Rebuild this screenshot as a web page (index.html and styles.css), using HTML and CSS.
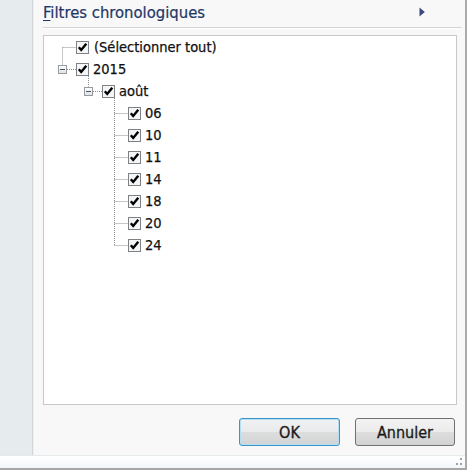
FILE: index.html
```html
<!DOCTYPE html>
<html lang="fr">
<head>
<meta charset="utf-8">
<title>Filtres chronologiques</title>
<link rel="stylesheet" href="styles.css">
</head>
<body>
<div class="window">
  <div class="body">
    <div class="side"></div>
    <div class="main">
      <div class="header">
        <span class="title"><u>F</u>iltres chronologiques</span>
        <svg class="arrow" width="6" height="10" viewBox="0 0 6 10"><path d="M0.5 0.5 L5.8 5 L0.5 9.5 Z" fill="#3b4a7e"/></svg>
      </div>
      <div class="listbox">
        <svg class="lines" width="120" height="220" viewBox="0 0 120 220">
          <g stroke="#8c8c8c" stroke-width="1" stroke-dasharray="1 1" fill="none">
            <path d="M18.5 11.5 V28.5"/>
            <path d="M18.5 11.5 H32"/>
            <path d="M23 33.5 H32"/>
            <path d="M44.5 40 V50.5"/>
            <path d="M49 55.5 H58"/>
            <path d="M70.5 62 V209.5"/>
            <path d="M70.5 77.5 H84"/>
            <path d="M70.5 99.5 H84"/>
            <path d="M70.5 121.5 H84"/>
            <path d="M70.5 143.5 H84"/>
            <path d="M70.5 165.5 H84"/>
            <path d="M70.5 187.5 H84"/>
            <path d="M70.5 209.5 H84"/>
          </g>
        </svg>
        <div class="row lvl0"><svg class="cb" width="13" height="13" viewBox="0 0 13 13"><rect x="0.5" y="0.5" width="12" height="12" fill="#f4f5f6" stroke="#7f8285"/><path d="M2.8 6.2 L5.2 9 L10.3 2.8" fill="none" stroke="#000" stroke-width="2.4"/></svg><span class="label">(Sélectionner tout)</span></div>
        <div class="row lvl1"><span class="exp"></span><svg class="cb" width="13" height="13" viewBox="0 0 13 13"><rect x="0.5" y="0.5" width="12" height="12" fill="#f4f5f6" stroke="#7f8285"/><path d="M2.8 6.2 L5.2 9 L10.3 2.8" fill="none" stroke="#000" stroke-width="2.4"/></svg><span class="label">2015</span></div>
        <div class="row lvl2"><span class="exp"></span><svg class="cb" width="13" height="13" viewBox="0 0 13 13"><rect x="0.5" y="0.5" width="12" height="12" fill="#f4f5f6" stroke="#7f8285"/><path d="M2.8 6.2 L5.2 9 L10.3 2.8" fill="none" stroke="#000" stroke-width="2.4"/></svg><span class="label">août</span></div>
        <div class="row lvl3"><svg class="cb" width="13" height="13" viewBox="0 0 13 13"><rect x="0.5" y="0.5" width="12" height="12" fill="#f4f5f6" stroke="#7f8285"/><path d="M2.8 6.2 L5.2 9 L10.3 2.8" fill="none" stroke="#000" stroke-width="2.4"/></svg><span class="label">06</span></div>
        <div class="row lvl3"><svg class="cb" width="13" height="13" viewBox="0 0 13 13"><rect x="0.5" y="0.5" width="12" height="12" fill="#f4f5f6" stroke="#7f8285"/><path d="M2.8 6.2 L5.2 9 L10.3 2.8" fill="none" stroke="#000" stroke-width="2.4"/></svg><span class="label">10</span></div>
        <div class="row lvl3"><svg class="cb" width="13" height="13" viewBox="0 0 13 13"><rect x="0.5" y="0.5" width="12" height="12" fill="#f4f5f6" stroke="#7f8285"/><path d="M2.8 6.2 L5.2 9 L10.3 2.8" fill="none" stroke="#000" stroke-width="2.4"/></svg><span class="label">11</span></div>
        <div class="row lvl3"><svg class="cb" width="13" height="13" viewBox="0 0 13 13"><rect x="0.5" y="0.5" width="12" height="12" fill="#f4f5f6" stroke="#7f8285"/><path d="M2.8 6.2 L5.2 9 L10.3 2.8" fill="none" stroke="#000" stroke-width="2.4"/></svg><span class="label">14</span></div>
        <div class="row lvl3"><svg class="cb" width="13" height="13" viewBox="0 0 13 13"><rect x="0.5" y="0.5" width="12" height="12" fill="#f4f5f6" stroke="#7f8285"/><path d="M2.8 6.2 L5.2 9 L10.3 2.8" fill="none" stroke="#000" stroke-width="2.4"/></svg><span class="label">18</span></div>
        <div class="row lvl3"><svg class="cb" width="13" height="13" viewBox="0 0 13 13"><rect x="0.5" y="0.5" width="12" height="12" fill="#f4f5f6" stroke="#7f8285"/><path d="M2.8 6.2 L5.2 9 L10.3 2.8" fill="none" stroke="#000" stroke-width="2.4"/></svg><span class="label">20</span></div>
        <div class="row lvl3"><svg class="cb" width="13" height="13" viewBox="0 0 13 13"><rect x="0.5" y="0.5" width="12" height="12" fill="#f4f5f6" stroke="#7f8285"/><path d="M2.8 6.2 L5.2 9 L10.3 2.8" fill="none" stroke="#000" stroke-width="2.4"/></svg><span class="label">24</span></div>
      </div>
      <div class="buttons">
        <button class="btn default">OK</button>
        <button class="btn">Annuler</button>
      </div>
    </div>
  </div>
  <div class="foot">
    <svg class="grip" width="10" height="10" viewBox="0 0 10 10">
      <g fill="#9aa3ab">
        <rect x="7" y="1" width="2" height="2"/>
        <rect x="3" y="6" width="2" height="2"/>
        <rect x="7" y="6" width="2" height="2"/>
      </g>
    </svg>
  </div>
</div>
</body>
</html>
```
FILE: styles.css
```css
html, body {
  margin: 0;
  padding: 0;
  background: #ffffff;
}
body {
  width: 474px;
  height: 476px;
  overflow: hidden;
  font-family: "DejaVu Sans Condensed", "DejaVu Sans", sans-serif;
  font-stretch: condensed;
}
.window {
  width: 465px;
  border-right: 2px solid #aaaaaa;
  border-bottom: 2px solid #a6a6a6;
  display: flex;
  flex-direction: column;
}
.body {
  height: 455px;
  display: flex;
}
.side {
  width: 32px;
  background: #e6ebee;
  border-right: 1px solid #d1d6d9;
  box-shadow: 1px 0 0 #eef1f2;
  margin-right: 1px;
  flex: none;
}
.main {
  flex: 1;
  background: #f8f8f8;
  display: flex;
  flex-direction: column;
}
.header {
  height: 27px;
  margin-left: 9px;
  margin-right: 3px;
  border-bottom: 1px solid #d4d4d4;
  box-shadow: 0 1px 0 #ffffff;
  display: flex;
  align-items: center;
  justify-content: space-between;
}
.title {
  font-size: 16.5px;
  color: #1e3766;
  margin-top: -3px;
  -webkit-text-stroke: 0.2px #1e3766;
}
.title u {
  text-decoration-thickness: 1px;
  text-underline-offset: 2px;
}
.arrow {
  margin-right: 37px;
  margin-top: -3px;
}
.listbox {
  position: relative;
  margin: 7px 8px 0 9px;
  height: 368px;
  border: 1px solid #c8c8c8;
  background: #ffffff;
}
.lines {
  position: absolute;
  left: 0;
  top: 0;
}
.row {
  height: 22px;
  display: flex;
  align-items: center;
  font-size: 14.5px;
  color: #111111;
  -webkit-text-stroke: 0.25px #111111;
}
.lvl0 { padding-left: 32px; }
.lvl1 { padding-left: 14px; }
.lvl2 { padding-left: 40px; }
.lvl3 { padding-left: 84px; }
.exp {
  width: 7px;
  height: 7px;
  border: 1px solid #979a9e;
  background: linear-gradient(#ffffff, #dde1e6);
  margin-right: 9px;
  position: relative;
  flex: none;
}
.exp::after {
  content: "";
  position: absolute;
  left: 1px;
  top: 3px;
  width: 5px;
  height: 1px;
  background: #4a5260;
}
.cb {
  flex: none;
  display: block;
}
.label {
  margin-left: 4px;
  white-space: nowrap;
}
.lvl0 .label { margin-left: 5px; }
.buttons {
  margin-top: 13px;
  display: flex;
  justify-content: flex-end;
  gap: 15px;
  padding-right: 10px;
}
.btn {
  height: 28px;
  width: 100px;
  border: 1px solid #707070;
  border-radius: 3px;
  background: linear-gradient(#f3f3f3 0%, #ebebeb 50%, #dddddd 51%, #d2d2d2 100%);
  font-family: "DejaVu Sans Condensed", "DejaVu Sans", sans-serif;
  font-stretch: condensed;
  font-size: 16px;
  color: #1a1a1a;
  -webkit-text-stroke: 0.3px #1a1a1a;
  padding: 0;
  margin: 0;
}
.btn.default {
  width: 101px;
  border-color: #3d94c8;
  box-shadow: inset 0 0 0 1px #b4def2;
  background: linear-gradient(#f1f2f3 0%, #e9eaeb 50%, #dcdddd 51%, #d3d4d5 100%);
}
.foot {
  height: 13px;
  background: linear-gradient(#ffffff, #f3f6f8);
  border-top: 1px solid #e4e9ec;
  display: flex;
  justify-content: flex-end;
  align-items: flex-end;
  box-sizing: border-box;
}
.grip {
  margin-right: 2px;
  margin-bottom: 1px;
}
```
